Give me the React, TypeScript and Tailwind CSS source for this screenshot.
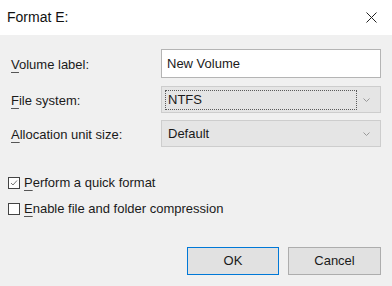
import React from 'react'

const font = { fontFamily: '"Liberation Sans", Arial, sans-serif' }

function Chevron() {
  return (
    <svg width="7" height="4" viewBox="0 0 7 4" className="shrink-0">
      <path d="M0.5 0.5 L3.5 3.5 L6.5 0.5" fill="none" stroke="#999" strokeWidth="1" />
    </svg>
  )
}

function Label({ k, rest }: { k: string; rest: string }) {
  return (
    <span className="text-[13px] leading-[19px] text-[#1a1a1a]">
      <span className="underline underline-offset-[3px] decoration-[#555]">{k}</span>
      {rest}
    </span>
  )
}

function Checkbox({ checked }: { checked?: boolean }) {
  return (
    <span className="flex h-[12px] w-[12px] items-center justify-center border border-[#444] bg-white">
      {checked && (
        <svg width="8" height="8" viewBox="0 0 8 8">
          <path d="M1 4 L3 6 L7 1.5" fill="none" stroke="#777" strokeWidth="1" />
        </svg>
      )}
    </span>
  )
}

export default function App() {
  return (
    <div className="flex h-[286px] w-[392px] flex-col bg-[#f0f0f0]" style={font}>
      <div className="flex h-[35px] items-center justify-between bg-white pl-[7px] pr-[15px]">
        <span className="text-[14px] text-[#111]">Format E:</span>
        <svg width="11" height="11" viewBox="0 0 11 11">
          <path d="M0.5 0.5 L10.5 10.5 M10.5 0.5 L0.5 10.5" stroke="#222" strokeWidth="1" />
        </svg>
      </div>

      <div className="flex flex-1 flex-col pl-[11px] pr-[11px] pt-[14px]">
        <div className="flex h-[29px] items-center">
          <div className="w-[150px]">
            <Label k="V" rest="olume label:" />
          </div>
          <div className="flex h-[29px] w-[220px] items-center border border-[#b4b4b4] bg-white pl-[5px] text-[13px] text-[#1a1a1a]">
            New Volume
          </div>
        </div>

        <div className="mt-[8px] flex h-[27px] items-center">
          <div className="w-[150px]">
            <Label k="F" rest="ile system:" />
          </div>
          <div className="flex h-[27px] w-[220px] items-center border border-[#cdcdcd] bg-[#e5e5e5] pl-[3px] pr-[10px]">
            <div className="flex h-[20px] w-[192px] items-center border border-dotted border-[#5a5a5a] pl-[2px] text-[13px] text-[#1a1a1a]">
              NTFS
            </div>
            <div className="flex flex-1 justify-end">
              <Chevron />
            </div>
          </div>
        </div>

        <div className="mt-[7px] flex h-[27px] items-center">
          <div className="w-[150px]">
            <Label k="A" rest="llocation unit size:" />
          </div>
          <div className="flex h-[27px] w-[220px] items-center justify-between border border-[#cdcdcd] bg-[#e5e5e5] pl-[6px] pr-[10px] text-[13px] text-[#1a1a1a]">
            Default
            <Chevron />
          </div>
        </div>

        <div className="ml-[-3px] mt-[26px] flex h-[19px] items-center gap-[4px]">
          <Checkbox checked />
          <Label k="P" rest="erform a quick format" />
        </div>
        <div className="ml-[-3px] mt-[7px] flex h-[19px] items-center gap-[4px]">
          <Checkbox />
          <Label k="E" rest="nable file and folder compression" />
        </div>

        <div className="mt-[29px] flex justify-end gap-[9px]">
          <button className="h-[28px] w-[92px] border border-[#0078d7] bg-[#e1e1e1] text-[13px] text-[#1a1a1a]">
            OK
          </button>
          <button className="h-[28px] w-[93px] border border-[#adadad] bg-[#e1e1e1] text-[13px] text-[#1a1a1a]">
            Cancel
          </button>
        </div>
      </div>
    </div>
  )
}
